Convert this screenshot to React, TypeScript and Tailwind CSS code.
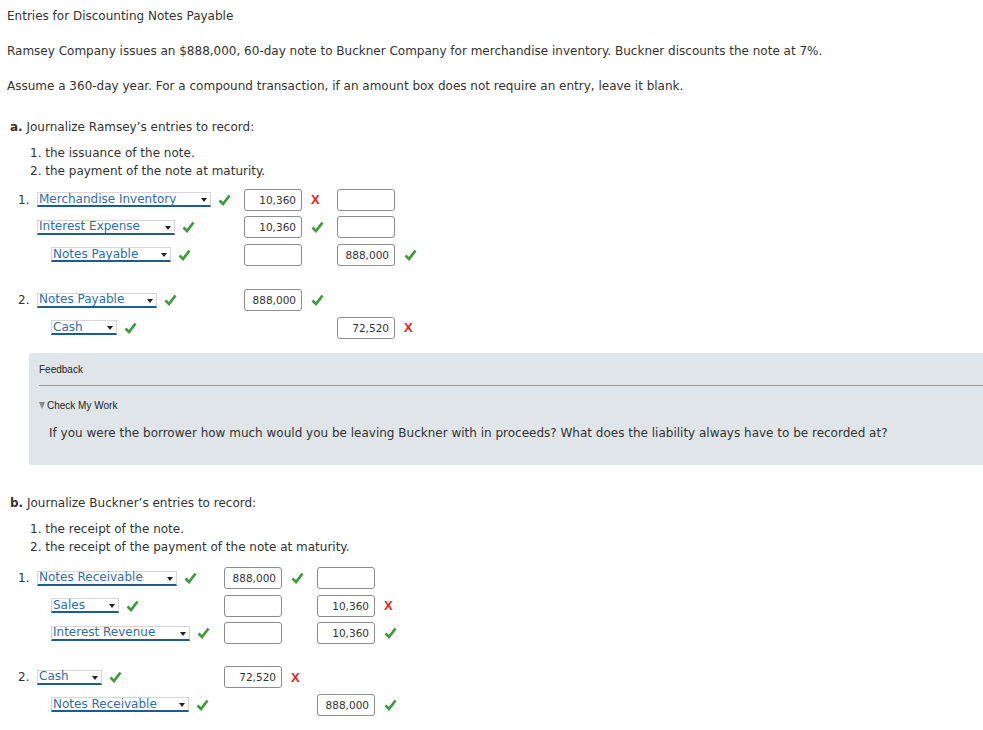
import React from 'react';

const FONT = { fontFamily: '"DejaVu Sans", Verdana, sans-serif' };

function Check() {
  return (
    <svg width="13" height="12" viewBox="0 0 13 12" className="shrink-0">
      <polyline points="1.5,6.5 5,10 11.5,1.5" fill="none" stroke="#3d9a3d" strokeWidth="2.7" strokeLinecap="butt" />
    </svg>
  );
}

function Cross() {
  return (
    <span className="text-[13px] font-bold leading-none text-[#e5231b]" style={{ fontFamily: '"Liberation Sans", Arial, sans-serif' }}>
      X
    </span>
  );
}

function Mark({ ok }: { ok?: boolean }) {
  if (ok === undefined) return null;
  return ok ? <Check /> : <Cross />;
}

function Select({ label, width }: { label: string; width: number }) {
  return (
    <div
      className="relative flex h-[15px] items-center border border-b-2 border-[#d6d6d6] border-b-[#1f5b8c] bg-white pl-[1px] text-[12px] leading-none text-[#2e6cb3]"
      style={{ width }}
    >
      <span className="-mt-[1px]">{label}</span>
      <span className="absolute right-[3px] top-[5px] h-0 w-0 border-x-[3.5px] border-t-[4px] border-x-transparent border-t-[#222]" />
    </div>
  );
}

function Amount({ value, ok }: { value?: string; ok?: boolean }) {
  return (
    <div className="flex w-[93px] items-center">
      <div className="flex h-[22px] w-[58px] items-center justify-end rounded-[3px] border border-[#8c8c8c] bg-white pr-[5px] text-[10.5px] text-[#333]">
        {value}
      </div>
      <div className="ml-[9px] flex items-center">
        <Mark ok={ok} />
      </div>
    </div>
  );
}

type Row = {
  num?: string;
  indent?: boolean;
  account: string;
  selWidth: number;
  debit?: { value?: string; ok?: boolean } | null;
  credit?: { value?: string; ok?: boolean } | null;
};

function EntryRow({ row, accountWidth }: { row: Row; accountWidth: number }) {
  return (
    <div className="flex h-[27.5px] items-center">
      <div className="flex items-center" style={{ width: accountWidth }}>
        <span className="w-[19px] text-[12px] text-[#333]">{row.num}</span>
        <div className={row.indent ? 'ml-[14px]' : ''}>
          <Select label={row.account} width={row.selWidth} />
        </div>
        <div className="ml-[7px]">
          <Check />
        </div>
      </div>
      {row.debit ? <Amount value={row.debit.value} ok={row.debit.ok} /> : <div className="w-[93px]" />}
      {row.credit ? <Amount value={row.credit.value} ok={row.credit.ok} /> : <div className="w-[93px]" />}
    </div>
  );
}

function Entries({ groups, accountWidth, gap }: { groups: Row[][]; accountWidth: number; gap: number }) {
  return (
    <div className="ml-[11px]">
      {groups.map((g, i) => (
        <div key={i} style={i > 0 ? { marginTop: gap } : undefined}>
          {g.map((r, j) => (
            <EntryRow key={j} row={r} accountWidth={accountWidth} />
          ))}
        </div>
      ))}
    </div>
  );
}

const partA: Row[][] = [
  [
    { num: '1.', account: 'Merchandise Inventory', selWidth: 174, debit: { value: '10,360', ok: false }, credit: {} },
    { account: 'Interest Expense', selWidth: 138, debit: { value: '10,360', ok: true }, credit: {} },
    { indent: true, account: 'Notes Payable', selWidth: 120, debit: {}, credit: { value: '888,000', ok: true } },
  ],
  [
    { num: '2.', account: 'Notes Payable', selWidth: 120, debit: { value: '888,000', ok: true }, credit: null },
    { indent: true, account: 'Cash', selWidth: 66, debit: null, credit: { value: '72,520', ok: false } },
  ],
];

const partB: Row[][] = [
  [
    { num: '1.', account: 'Notes Receivable', selWidth: 140, debit: { value: '888,000', ok: true }, credit: {} },
    { indent: true, account: 'Sales', selWidth: 68, debit: {}, credit: { value: '10,360', ok: false } },
    { indent: true, account: 'Interest Revenue', selWidth: 139, debit: {}, credit: { value: '10,360', ok: true } },
  ],
  [
    { num: '2.', account: 'Cash', selWidth: 65, debit: { value: '72,520', ok: false }, credit: null },
    { indent: true, account: 'Notes Receivable', selWidth: 138, debit: null, credit: { value: '888,000', ok: true } },
  ],
];

export default function App() {
  return (
    <div className="min-h-[730px] w-[983px] overflow-hidden bg-white pl-[7px] pt-[7px] text-[12px] leading-[18px] text-[#333]" style={FONT}>
      <p>Entries for Discounting Notes Payable</p>
      <p className="mt-[17px]">
        Ramsey Company issues an $888,000, 60-day note to Buckner Company for merchandise inventory. Buckner discounts the note at 7%.
      </p>
      <p className="mt-[17px]">Assume a 360-day year. For a compound transaction, if an amount box does not require an entry, leave it blank.</p>

      <p className="ml-[3px] mt-[23px]">
        <b>a.</b> Journalize Ramsey’s entries to record:
      </p>
      <div className="ml-[23px] mt-[8px]">
        <p>1. the issuance of the note.</p>
        <p>2. the payment of the note at maturity.</p>
      </div>
      <div className="mt-[6px]">
        <Entries groups={partA} accountWidth={226} gap={18} />
      </div>

      {/* feedback panel */}
      <div className="ml-[22px] mt-[11px] h-[112px] rounded-l-[3px] bg-[#dfe5e9]">
        <div className="pl-[10px] pt-[11px] text-[10px] leading-[12px] text-[#222]" style={{ fontFamily: '"Liberation Sans", Arial, sans-serif' }}>
          Feedback
        </div>
        <div className="ml-[10px] mt-[9px] border-t border-[#9a9a9a]" />
        <div className="mt-[14px] flex items-center pl-[10px] text-[10px] leading-[12px] text-[#222]" style={{ fontFamily: '"Liberation Sans", Arial, sans-serif' }}>
          <span className="mr-[2px] h-0 w-0 border-x-[3px] border-t-[7px] border-x-transparent border-t-[#8a8a8a]" />
          Check My Work
        </div>
        <p className="mt-[12px] pl-[20px] text-[12px] leading-[18px] text-[#333]">
          If you were the borrower how much would you be leaving Buckner with in proceeds? What does the liability always have to be recorded at?
        </p>
      </div>

      <p className="ml-[3px] mt-[29px]">
        <b>b.</b> Journalize Buckner’s entries to record:
      </p>
      <div className="ml-[23px] mt-[8px]">
        <p>1. the receipt of the note.</p>
        <p>2. the receipt of the payment of the note at maturity.</p>
      </div>
      <div className="mt-[9px]">
        <Entries groups={partB} accountWidth={206} gap={16.5} />
      </div>
    </div>
  );
}
